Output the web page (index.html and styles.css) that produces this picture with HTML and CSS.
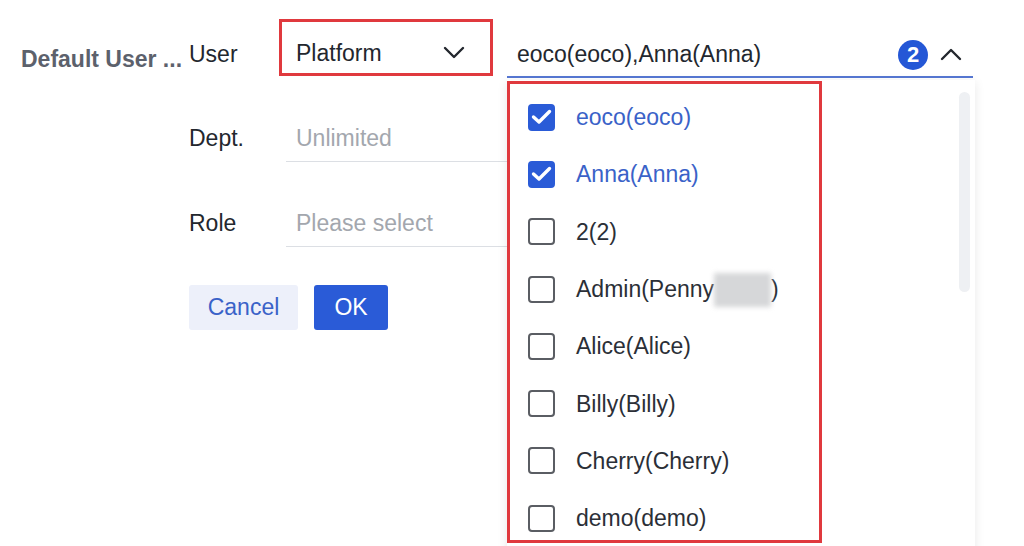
FILE: index.html
```html
<!DOCTYPE html>
<html>
<head>
<meta charset="utf-8">
<link rel="stylesheet" href="styles.css">
</head>
<body>
<div class="page">
  <div class="section-label">Default User ...</div>
  <div class="form">
    <div class="row row-user">
      <div class="label">User</div>
      <div class="type-select">
        <span>Platform</span>
        <svg class="chev" width="22" height="13" viewBox="0 0 22 13"><path d="M2 2 L11 11 L20 2" fill="none" stroke="#23272e" stroke-width="2.4" stroke-linecap="round" stroke-linejoin="round"/></svg>
      </div>
      <div class="multi">
        <span class="multi-value">eoco(eoco),Anna(Anna)</span>
        <span class="multi-end">
          <span class="badge">2</span>
          <svg class="chev" width="22" height="13" viewBox="0 0 22 13"><path d="M2 11 L11 2 L20 11" fill="none" stroke="#23272e" stroke-width="2.4" stroke-linecap="round" stroke-linejoin="round"/></svg>
        </span>
        <div class="dropdown">
          <div class="scroll-thumb"></div>
          <ul class="options">
            <li class="option selected"><span class="box"><svg width="21" height="16" viewBox="0 0 21 16"><path d="M2.5 8 L8 13 L18.5 2.5" fill="none" stroke="#fff" stroke-width="3.4" stroke-linecap="round" stroke-linejoin="round"/></svg></span>eoco(eoco)</li>
            <li class="option selected"><span class="box"><svg width="21" height="16" viewBox="0 0 21 16"><path d="M2.5 8 L8 13 L18.5 2.5" fill="none" stroke="#fff" stroke-width="3.4" stroke-linecap="round" stroke-linejoin="round"/></svg></span>Anna(Anna)</li>
            <li class="option"><span class="box"></span>2(2)</li>
            <li class="option"><span class="box"></span>Admin(Penny<span class="blur"></span>)</li>
            <li class="option"><span class="box"></span>Alice(Alice)</li>
            <li class="option"><span class="box"></span>Billy(Billy)</li>
            <li class="option"><span class="box"></span>Cherry(Cherry)</li>
            <li class="option"><span class="box"></span>demo(demo)</li>
          </ul>
        </div>
      </div>
    </div>
    <div class="row row-field">
      <div class="label label-wide">Dept.</div>
      <div class="field">Unlimited</div>
    </div>
    <div class="row row-field row-role">
      <div class="label label-wide">Role</div>
      <div class="field">Please select</div>
    </div>
    <div class="actions">
      <button class="btn btn-cancel">Cancel</button>
      <button class="btn btn-ok">OK</button>
    </div>
  </div>
</div>
</body>
</html>
```

FILE: styles.css
```css
* { box-sizing: border-box; }
html, body {
  margin: 0;
  padding: 0;
  background: #fff;
  width: 1024px;
  height: 546px;
  overflow: hidden;
}
body {
  font-family: "Liberation Sans", Arial, sans-serif;
  font-size: 23px;
  color: #23272e;
}
.page {
  display: flex;
  align-items: flex-start;
}
.section-label {
  width: 189px;
  padding-left: 21px;
  margin-top: 46px;
  line-height: 26px;
  font-weight: bold;
  color: #5c616c;
  white-space: nowrap;
}
.form {
  display: flex;
  flex-direction: column;
  padding-top: 19px;
}
.row {
  display: flex;
  align-items: flex-start;
}
.row-user {
  height: 57px;
}
.label {
  width: 90px;
  height: 57px;
  padding-top: 13px;
  display: flex;
  align-items: center;
  line-height: 26px;
}
.type-select {
  width: 214px;
  height: 57px;
  border: 3px solid #e0393e;
  padding: 10px 25px 0 14px;
  display: flex;
  align-items: center;
  justify-content: space-between;
  line-height: 26px;
}
.multi {
  position: relative;
  margin-left: 14px;
  width: 466px;
  height: 59px;
  border-bottom: 2px solid #5677d3;
  padding: 13px 11px 0 10px;
  display: flex;
  align-items: center;
  justify-content: space-between;
  line-height: 26px;
}
.multi-end {
  display: flex;
  align-items: center;
  gap: 12px;
}
.badge {
  width: 30px;
  height: 30px;
  border-radius: 50%;
  background: #2457d6;
  color: #fff;
  font-weight: bold;
  font-size: 22px;
  display: flex;
  align-items: center;
  justify-content: center;
  margin-top: 2px;
}
.chev { display: block; }
.dropdown {
  position: absolute;
  left: 0;
  top: 61px;
  width: 468px;
  height: 480px;
  background: #fff;
  box-shadow: 0 2px 10px rgba(0, 0, 0, 0.09);
  z-index: 5;
  padding-top: 1px;
}
.scroll-thumb {
  position: absolute;
  left: 452px;
  top: 12px;
  width: 11px;
  height: 200px;
  border-radius: 6px;
  background: #eef0f3;
}
.options {
  list-style: none;
  margin: 0;
  width: 315px;
  height: 462px;
  border: 3px solid #e0393e;
  padding: 4.5px 0 0 18px;
  overflow: hidden;
}
.option {
  height: 57.3px;
  display: flex;
  align-items: center;
  color: #2b2f37;
  white-space: nowrap;
}
.option.selected { color: #3a62c8; }
.box {
  width: 27px;
  height: 27px;
  border: 2px solid #5a5d63;
  border-radius: 4px;
  margin-right: 21px;
  flex: none;
  display: flex;
  align-items: center;
  justify-content: center;
}
.option.selected .box {
  background: #2a5bd7;
  border-color: #2a5bd7;
}
.blur {
  display: inline-block;
  width: 57px;
  height: 34px;
  background: #d6d7d9;
  filter: blur(2.5px);
  margin-top: 2px;
}
.row-field {
  margin-top: 39px;
  height: 47px;
}
.row-role { margin-top: 38px; }
.label-wide {
  width: 97px;
  height: 46px;
  padding-top: 0;
}
.field {
  width: 687px;
  height: 47px;
  border-bottom: 1px solid #dcdfe4;
  padding-left: 10px;
  display: flex;
  align-items: center;
  color: #a3a7ae;
  line-height: 26px;
}
.actions {
  margin-top: 38px;
  display: flex;
  gap: 16px;
}
.btn {
  height: 45px;
  border: none;
  border-radius: 3px;
  font-family: "Liberation Sans", Arial, sans-serif;
  font-size: 23px;
  padding: 0;
  cursor: pointer;
}
.btn-cancel {
  width: 109px;
  background: #edf0fa;
  color: #3a62c8;
}
.btn-ok {
  width: 74px;
  background: #2a5bd7;
  color: #fff;
}
```
